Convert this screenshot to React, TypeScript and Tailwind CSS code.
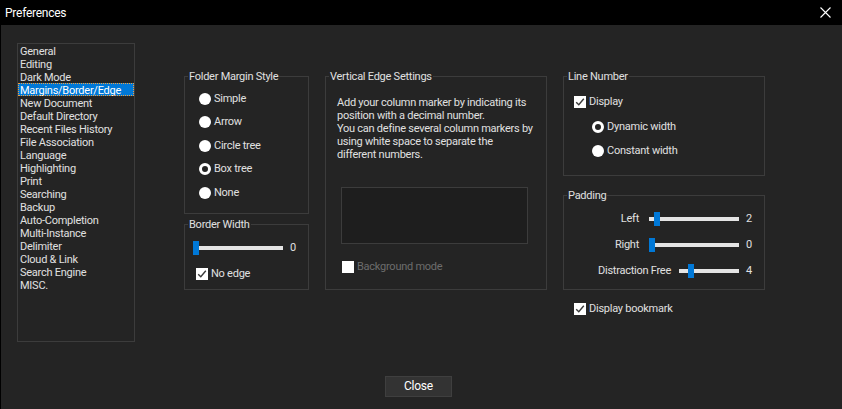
import React from 'react'

const pages = [
  'General',
  'Editing',
  'Dark Mode',
  'Margins/Border/Edge',
  'New Document',
  'Default Directory',
  'Recent Files History',
  'File Association',
  'Language',
  'Highlighting',
  'Print',
  'Searching',
  'Backup',
  'Auto-Completion',
  'Multi-Instance',
  'Delimiter',
  'Cloud & Link',
  'Search Engine',
  'MISC.',
]

function Group({ title, className, children }: { title: string; className: string; children?: React.ReactNode }) {
  return (
    <div className={`relative border border-[#3c3c3c] ${className}`}>
      <span className="absolute -top-[7px] left-[3px] bg-[#242424] px-[1px] leading-[14px]">{title}</span>
      {children}
    </div>
  )
}

function Radio({ label, checked, className = '' }: { label: string; checked?: boolean; className?: string }) {
  return (
    <div className={`flex items-center h-[14px] ${className}`}>
      <span
        className={`w-[12px] h-[12px] rounded-full shrink-0 ${checked ? 'border-[3px] border-white bg-[#242424]' : 'bg-white'}`}
      />
      <span className="ml-[3px] leading-[14px]">{label}</span>
    </div>
  )
}

function Checkbox({ label, checked, disabled, className = '' }: { label: string; checked?: boolean; disabled?: boolean; className?: string }) {
  return (
    <div className={`flex items-center h-[14px] ${className}`}>
      <span className="w-[12px] h-[12px] bg-white shrink-0 flex items-center justify-center">
        {checked && (
          <svg width="12" height="12" viewBox="0 0 12 12">
            <path d="M2.2 6.2 L4.8 8.8 L9.8 2.8" fill="none" stroke="#3a3a3a" strokeWidth="1.4" />
          </svg>
        )}
      </span>
      <span className={`ml-[3px] leading-[14px] ${disabled ? 'text-[#6d6d6d]' : ''}`}>{label}</span>
    </div>
  )
}

function Slider({ width, thumb }: { width: string; thumb: string }) {
  return (
    <div className={`relative h-[14px] flex items-center ${width}`}>
      <div className="w-full h-[4px] bg-[#e4e4e4]" />
      <div className={`absolute top-0 w-[6px] h-[14px] bg-[#0078d7] ${thumb}`} />
    </div>
  )
}

export default function App() {
  return (
    <div className="w-[842px] h-[409px] font-['Roboto',sans-serif] text-[11px] tracking-[-0.25px] text-[#e0e0e0] overflow-hidden">
      <div className="h-[25px] bg-black flex items-center justify-between pl-[5px] pr-[11px]">
        <span className="text-white text-[12px]">Preferences</span>
        <svg width="11" height="11" viewBox="0 0 11 11">
          <path d="M0.5 0.5 L10.5 10.5 M10.5 0.5 L0.5 10.5" stroke="#fff" strokeWidth="1.1" />
        </svg>
      </div>

      <div className="h-[384px] bg-[#242424] border-l border-black">
        <div className="flex items-start pl-[16px] pt-[18px]">
          <div className="w-[118px] h-[299px] border border-[#3c3c3c]">
            {pages.map((p) => (
              <div
                key={p}
                className={`h-[13px] pt-[1px] leading-[13px] pl-[2px] whitespace-nowrap ${
                  p === 'Margins/Border/Edge'
                    ? 'bg-[#0078d7] text-white outline-1 outline-dotted outline-[#f0a040] -outline-offset-1'
                    : ''
                }`}
              >
                {p}
              </div>
            ))}
          </div>

          <div className="flex items-start ml-[49px] mt-[33px]">
            <div className="w-[125px] flex flex-col">
              <Group title="Folder Margin Style" className="h-[138px] pl-[14px]">
                <Radio label="Simple" className="mt-[15px]" />
                <Radio label="Arrow" className="mt-[9px]" />
                <Radio label="Circle tree" className="mt-[10px]" />
                <Radio label="Box tree" checked className="mt-[9px]" />
                <Radio label="None" className="mt-[10px]" />
              </Group>
              <Group title="Border Width" className="h-[66px] mt-[10px]">
                <div className="flex items-center mt-[16px] ml-[8px]">
                  <Slider width="w-[90px]" thumb="left-0" />
                  <span className="ml-[7px] leading-[14px]">0</span>
                </div>
                <Checkbox label="No edge" checked className="mt-[12px] ml-[11px]" />
              </Group>
            </div>

            <Group title="Vertical Edge Settings" className="w-[222px] h-[214px] ml-[16px] pl-[11px] pt-[19px]">
              <p className="leading-[13px] whitespace-nowrap">
                Add your column marker by indicating its
                <br />
                position with a decimal number.
                <br />
                You can define several column markers by
                <br />
                using white space to separate the
                <br />
                different numbers.
              </p>
              <div className="w-[187px] h-[57px] ml-[4px] mt-[26px] bg-[#1e1e1e] border border-[#3c3c3c]" />
              <Checkbox label="Background mode" disabled className="mt-[16px] ml-[5px]" />
            </Group>

            <div className="w-[202px] ml-[16px] flex flex-col">
              <Group title="Line Number" className="h-[100px]">
                <Checkbox label="Display" checked className="mt-[18px] ml-[10px]" />
                <Radio label="Dynamic width" checked className="mt-[11px] ml-[28px]" />
                <Radio label="Constant width" className="mt-[10px] ml-[28px]" />
              </Group>
              <Group title="Padding" className="h-[95px] mt-[19px]">
                <div className="flex items-center mt-[16px]">
                  <span className="flex-1 text-right leading-[14px]">Left</span>
                  <Slider width="w-[90px] ml-[10px]" thumb="left-[5px]" />
                  <span className="w-[18px] ml-[7px] leading-[14px]">2</span>
                </div>
                <div className="flex items-center mt-[12px]">
                  <span className="flex-1 text-right leading-[14px]">Right</span>
                  <Slider width="w-[90px] ml-[10px]" thumb="left-0" />
                  <span className="w-[18px] ml-[7px] leading-[14px]">0</span>
                </div>
                <div className="flex items-center mt-[12px]">
                  <span className="flex-1 text-right leading-[14px]">Distraction Free</span>
                  <Slider width="w-[60px] ml-[8px]" thumb="left-[9px]" />
                  <span className="w-[18px] ml-[7px] leading-[14px]">4</span>
                </div>
              </Group>
              <Checkbox label="Display bookmark" checked className="mt-[12px] ml-[11px]" />
            </div>
          </div>
        </div>

        <div className="pl-[384px] mt-[34px]">
          <button className="w-[67px] h-[21px] bg-[#333333] border border-[#3f3f3f] text-white text-[12px] leading-[19px]">
            Close
          </button>
        </div>
      </div>
    </div>
  )
}
